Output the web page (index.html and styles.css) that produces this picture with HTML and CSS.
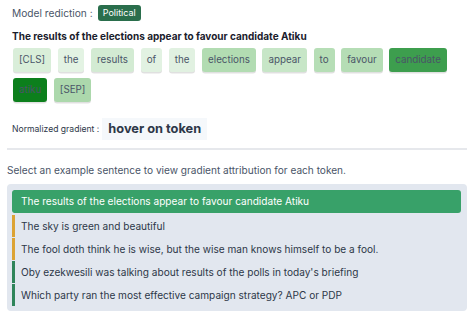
FILE: index.html
```html
<!DOCTYPE html>
<html>
<head>
<meta charset="utf-8">
<link rel="stylesheet" href="styles.css">
</head>
<body>
<div class="app">
  <div class="pred-row">
    <span class="pred-label">Model rediction :</span>
    <span class="badge">Political</span>
  </div>
  <div class="sentence">The results of the elections appear to favour candidate Atiku</div>
  <div class="tokens">
    <span class="tok" style="background:#d9eed9">[CLS]</span>
    <span class="tok" style="background:#e3f3e3">the</span>
    <span class="tok" style="background:#d3ebd3">results</span>
    <span class="tok" style="background:#e2f2e2">of</span>
    <span class="tok" style="background:#e1f1e1">the</span>
    <span class="tok" style="background:#b2dcb2">elections</span>
    <span class="tok" style="background:#c7e6c7">appear</span>
    <span class="tok" style="background:#b6deb6">to</span>
    <span class="tok" style="background:#b5ddb5">favour</span>
    <span class="tok" style="background:#3d9e4e">candidate</span>
    <span class="tok" style="background:#0c7f1c">atiku</span>
    <span class="tok" style="background:#acd8ac">[SEP]</span>
  </div>
  <div class="grad-row">
    <span class="grad-label">Normalized gradient :</span>
    <span class="grad-value">hover on token</span>
  </div>
  <hr class="divider">
  <p class="hint">Select an example sentence to view gradient attribution for each token.</p>
  <div class="panel">
    <div class="item selected">The results of the elections appear to favour candidate Atiku</div>
    <div class="item warn">The sky is green and beautiful</div>
    <div class="item warn">The fool doth think he is wise, but the wise man knows himself to be a fool.</div>
    <div class="item ok">Oby ezekwesili was talking about results of the polls in today's briefing</div>
    <div class="item ok">Which party ran the most effective campaign strategy? APC or PDP</div>
  </div>
</div>
</body>
</html>
```

FILE: styles.css
```css
* { box-sizing: border-box; }
html, body { margin: 0; padding: 0; background: #ffffff; }
body {
  font-family: Inter, "Noto Sans", "Liberation Sans", sans-serif;
  color: #2d3748;
  width: 474px;
  height: 324px;
  overflow: hidden;
}
.app {
  padding: 5px 7px 0 7px;
}
.pred-row {
  display: flex;
  align-items: center;
  gap: 5px;
  padding-left: 5px;
  height: 16px;
}
.pred-label {
  font-size: 10.2px;
  color: #4a5568;
}
.badge {
  background: #2a6e4c;
  color: #ffffff;
  font-size: 9px;
  line-height: 16px;
  height: 16px;
  padding: 0 5px;
  border-radius: 3px;
}
.sentence {
  margin-top: 8px;
  padding-left: 5px;
  font-size: 10px;
  font-weight: 700;
  color: #1a202c;
  line-height: 14px;
}
.tokens {
  margin-top: 5px;
  padding-left: 6px;
  display: flex;
  flex-wrap: wrap;
  column-gap: 6.6px;
  row-gap: 6px;
  width: 450px;
}
.tok {
  height: 24px;
  line-height: 24px;
  padding: 0 6px;
  font-size: 9.8px;
  color: #4a5568;
  border-radius: 3px;
  box-shadow: 0 1.5px 0 rgba(0, 0, 0, 0.12);
}
.grad-row {
  margin-top: 16px;
  padding-left: 5px;
  display: flex;
  align-items: center;
  gap: 3px;
  height: 22px;
}
.grad-label {
  font-size: 8.6px;
  color: #2d3748;
}
.grad-value {
  background: #f5f8fb;
  font-size: 12.8px;
  font-weight: 700;
  color: #2d3748;
  padding: 0 6px;
  line-height: 22px;
  height: 22px;
}
.divider {
  border: 0;
  height: 2px;
  background: #e6e8ec;
  margin: 8px 0 0 0;
}
.hint {
  margin: 13px 0 0 0;
  font-size: 10.1px;
  color: #4a5568;
  line-height: 14px;
}
.panel {
  margin-top: 7px;
  background: #e2e7ef;
  border-radius: 4px;
  padding: 6px 6px 5px 5px;
  display: flex;
  flex-direction: column;
  gap: 1px;
}
.item {
  height: 22px;
  line-height: 22px;
  font-size: 10.1px;
  padding-left: 6px;
  border-left: 3px solid transparent;
  color: #2d3748;
}
.item.selected {
  background: #38a169;
  color: #ffffff;
  border-left-color: #38a169;
  border-radius: 3px;
  height: 23px;
  line-height: 23px;
  margin-bottom: 1px;
}
.item.warn { border-left-color: #dca334; }
.item.ok { border-left-color: #2f855a; }
```
